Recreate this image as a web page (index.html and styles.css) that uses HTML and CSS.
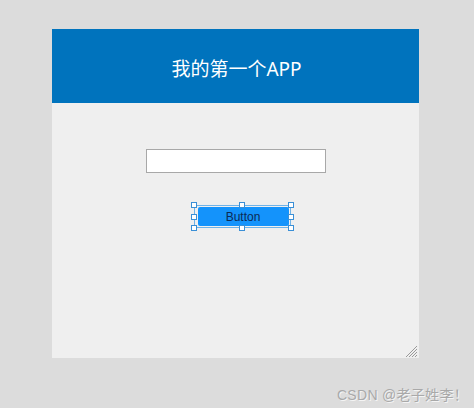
FILE: index.html
```html
<!DOCTYPE html>
<html lang="zh">
<head>
<meta charset="utf-8">
<link rel="stylesheet" href="styles.css">
</head>
<body>
<div class="stage">
  <div class="window">
    <header class="titlebar">我的第一个APP</header>
    <main class="content">
      <input class="field" type="text">
      <div class="btn-row">
        <div class="selected">
          <button class="btn">Button</button>
          <span class="h tl"></span><span class="h tc"></span><span class="h tr"></span>
          <span class="h ml"></span><span class="h mr"></span>
          <span class="h bl"></span><span class="h bc"></span><span class="h br"></span>
        </div>
      </div>
      <svg class="grip" width="12" height="12" viewBox="0 0 12 12">
        <path d="M12 1 L1 12 M12 4 L4 12 M12 7 L7 12 M12 10 L10 12" stroke="#9a9a9a" stroke-width="1"/>
      </svg>
    </main>
  </div>
  <div class="mark">CSDN @老子姓李！</div>
</div>
</body>
</html>
```
FILE: styles.css
```css
html, body {
  margin: 0;
  padding: 0;
  background: #dcdcdc;
}
.stage {
  width: 474px;
  height: 408px;
  display: flex;
  flex-direction: column;
  padding: 29px 0 0 52px;
  box-sizing: border-box;
  font-family: "Noto Sans", "Noto Sans CJK SC", sans-serif;
}
.window {
  width: 367px;
  height: 329px;
  display: flex;
  flex-direction: column;
  background: #efefef;
}
.titlebar {
  height: 74px;
  background: #0073bd;
  color: #fff;
  font-size: 19px;
  display: flex;
  align-items: center;
  justify-content: center;
  padding: 3px 0 0 2px;
  box-sizing: border-box;
}
.content {
  flex: 1;
  position: relative;
  display: flex;
  flex-direction: column;
  align-items: center;
  padding-top: 46px;
}
.field {
  width: 180px;
  height: 24px;
  box-sizing: border-box;
  border: 1px solid #a8a8a8;
  background: #fff;
  margin: 0 0 0 1px;
  padding: 0;
}
.btn-row {
  margin-top: 32px;
  padding-left: 13px;
}
.selected {
  position: relative;
  padding: 1px 1px 1px 3px;
  border: 1px solid #6fb3e8;
}
.btn {
  display: block;
  width: 91px;
  height: 19px;
  border: none;
  border-radius: 2px;
  background: #1493fb;
  color: #0b2a55;
  font-family: "Liberation Sans", Arial, sans-serif;
  font-size: 12px;
  padding: 0;
}
.h {
  position: absolute;
  width: 4px;
  height: 4px;
  border: 1px solid #3a8fd6;
  background: #fff;
}
.tl { left: -4px; top: -4px; }
.tc { left: calc(50% - 3px); top: -4px; }
.tr { right: -4px; top: -4px; }
.ml { left: -4px; top: calc(50% - 3px); }
.mr { right: -4px; top: calc(50% - 3px); }
.bl { left: -4px; bottom: -4px; }
.bc { left: calc(50% - 3px); bottom: -4px; }
.br { right: -4px; bottom: -4px; }
.grip {
  position: absolute;
  right: 2px;
  bottom: 1px;
}
.mark {
  align-self: flex-end;
  margin: 26px 6px 0 0;
  color: #a9a9a9;
  font-size: 14px;
  letter-spacing: 0.3px;
  text-shadow: 1px 1px 0 #f4f4f4;
  font-family: "Liberation Sans", "Noto Sans CJK SC", sans-serif;
}
```
